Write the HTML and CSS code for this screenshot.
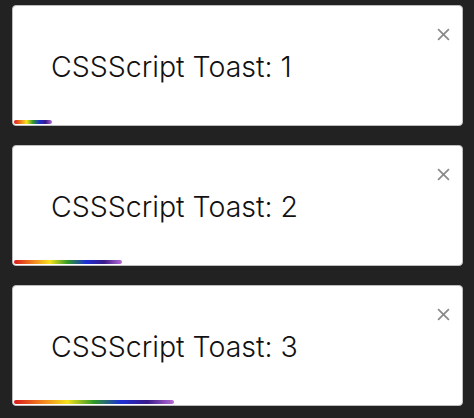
FILE: index.html
```html
<!DOCTYPE html>
<html>
<head>
<meta charset="utf-8">
<link rel="stylesheet" href="styles.css">
</head>
<body>
<div class="stack">
  <div class="toast">
    <span class="msg">CSSScript Toast: 1</span>
    <svg class="close" viewBox="0 0 12 12"><path d="M1 1L11 11M11 1L1 11"/></svg>
    <div class="bar" style="width:38px"></div>
  </div>
  <div class="toast">
    <span class="msg">CSSScript Toast: 2</span>
    <svg class="close" viewBox="0 0 12 12"><path d="M1 1L11 11M11 1L1 11"/></svg>
    <div class="bar" style="width:108px"></div>
  </div>
  <div class="toast">
    <span class="msg">CSSScript Toast: 3</span>
    <svg class="close" viewBox="0 0 12 12"><path d="M1 1L11 11M11 1L1 11"/></svg>
    <div class="bar" style="width:160px"></div>
  </div>
</div>
</body>
</html>
```
FILE: styles.css
```css
html, body {
  margin: 0;
  background: #222222;
  height: 100%;
}
.stack {
  display: flex;
  flex-direction: column;
  gap: 19px;
  padding: 5px 11px 0 12px;
}
.toast {
  position: relative;
  height: 121px;
  box-sizing: border-box;
  background: #fff;
  border: 1px solid #bdbdbd;
  border-radius: 4px;
  display: flex;
  align-items: center;
  padding-left: 38px;
  font-family: Inter, "Noto Sans", sans-serif;
}
.msg {
  font-size: 28.5px;
  font-weight: 300;
  color: #111;
  margin-top: 1px;
}
.close {
  position: absolute;
  top: 22px;
  right: 12px;
  width: 13px;
  height: 13px;
  fill: none;
  stroke: #8a8a8a;
  stroke-width: 1.6;
}
.bar {
  position: absolute;
  left: 1px;
  bottom: 1px;
  height: 4px;
  border-radius: 2px;
  background: linear-gradient(to right, #d81b1b, #f07c1e, #f5e21c, #2e9a28, #1d2fd6, #3a1a8a, #b86ad6);
}
```
